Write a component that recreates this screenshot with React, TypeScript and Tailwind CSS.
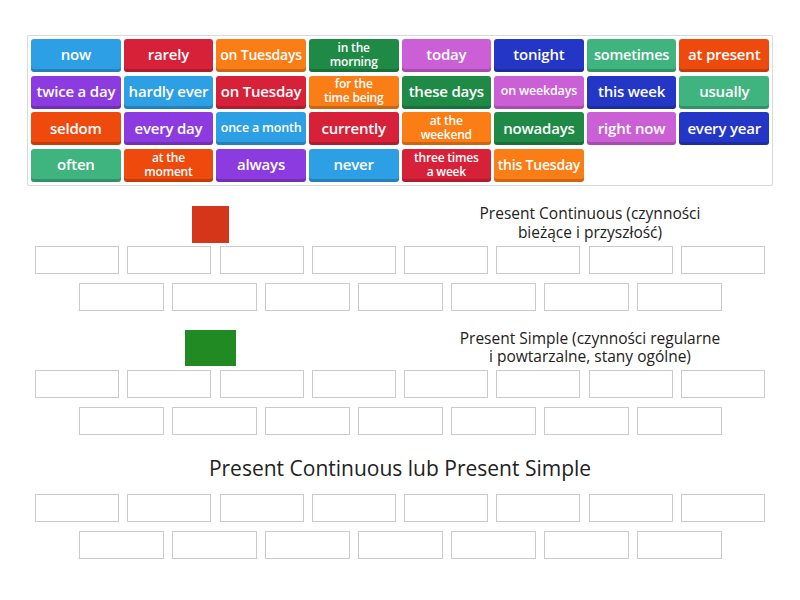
import React from 'react';

type Tile = { label: string; color: string; size?: string; two?: boolean };

const BLUE = 'bg-[#2d9fe5]';
const RED = 'bg-[#d72139]';
const ORANGE = 'bg-[#fa7d15]';
const DGREEN = 'bg-[#1f8a46]';
const MAGENTA = 'bg-[#cb5fd5]';
const DBLUE = 'bg-[#2436c6]';
const SEA = 'bg-[#3fb47f]';
const ORED = 'bg-[#ee4a0d]';
const PURPLE = 'bg-[#8b3be0]';

const tiles: Tile[] = [
  { label: 'now', color: BLUE },
  { label: 'rarely', color: RED },
  { label: 'on Tuesdays', color: ORANGE, size: 'text-[14px]' },
  { label: 'in the morning', color: DGREEN, two: true },
  { label: 'today', color: MAGENTA },
  { label: 'tonight', color: DBLUE },
  { label: 'sometimes', color: SEA, size: 'text-[14.5px]' },
  { label: 'at present', color: ORED },
  { label: 'twice a day', color: PURPLE },
  { label: 'hardly ever', color: BLUE },
  { label: 'on Tuesday', color: RED },
  { label: 'for the time being', color: ORANGE, two: true },
  { label: 'these days', color: DGREEN },
  { label: 'on weekdays', color: MAGENTA, size: 'text-[12.5px]' },
  { label: 'this week', color: DBLUE },
  { label: 'usually', color: SEA },
  { label: 'seldom', color: ORED },
  { label: 'every day', color: PURPLE },
  { label: 'once a month', color: BLUE, size: 'text-[12.5px]' },
  { label: 'currently', color: RED },
  { label: 'at the weekend', color: ORANGE, two: true },
  { label: 'nowadays', color: DGREEN },
  { label: 'right now', color: MAGENTA },
  { label: 'every year', color: DBLUE },
  { label: 'often', color: SEA },
  { label: 'at the moment', color: ORED, two: true },
  { label: 'always', color: PURPLE },
  { label: 'never', color: BLUE },
  { label: 'three times a week', color: RED, two: true },
  { label: 'this Tuesday', color: ORANGE, size: 'text-[14px]' },
];

function twoLines(label: string) {
  if (label === 'three times a week') return ['three times', 'a week'];
  if (label === 'for the time being') return ['for the', 'time being'];
  const words = label.split(' ');
  return [words.slice(0, 2).join(' '), words.slice(2).join(' ')];
}

function DropRows() {
  return (
    <div className="flex flex-col gap-[9px]">
      <div className="flex justify-center gap-[8.3px]">
        {Array.from({ length: 8 }).map((_, i) => (
          <div key={i} className="w-[84px] h-[28px] border border-[#cbcbcb] bg-white" />
        ))}
      </div>
      <div className="flex justify-center gap-[8px]">
        {Array.from({ length: 7 }).map((_, i) => (
          <div key={i} className="w-[85px] h-[28px] border border-[#cbcbcb] bg-white" />
        ))}
      </div>
    </div>
  );
}

export default function App() {
  return (
    <div
      className="w-[800px] h-[600px] bg-white text-[#222]"
      style={{ fontFamily: '"Open Sans", sans-serif' }}
    >
      {/* Tile bank */}
      <div className="pt-[35px] px-[27px]">
        <div className="border border-[#d9d9d9] rounded-[2px] px-[3px] pt-[3px] pb-[3px]">
          <div className="grid grid-cols-8 gap-x-[3px] gap-y-[3.7px] auto-rows-[33px]">
            {tiles.map((t) => (
              <div
                key={t.label}
                className={`${t.color} rounded-[3px] flex items-center justify-center text-white font-semibold text-center whitespace-nowrap tracking-[-0.2px] shadow-[inset_0_-3px_0_rgba(0,0,0,0.18)] ${
                  t.two ? 'text-[12px] leading-[14px]' : t.size ?? 'text-[15px]'
                }`}
              >
                {t.two ? (
                  <div className="flex flex-col -mt-[2px]">
                    {twoLines(t.label).map((l) => (
                      <span key={l}>{l}</span>
                    ))}
                  </div>
                ) : (
                  <span className="-mt-[2px]">{t.label}</span>
                )}
              </div>
            ))}
          </div>
        </div>
      </div>

      {/* Group 1 */}
      <div className="px-[20px] mt-[16px]">
        <div className="grid grid-cols-2 h-[44px] items-center">
          <div className="flex justify-center">
            <div className="w-[37px] h-[37px] bg-[#d5361a]" />
          </div>
          <div className="text-center text-[15.5px] leading-[19px] -mt-[2px]">
            Present Continuous (czynności
            <br />
            bieżące i przyszłość)
          </div>
        </div>
        <DropRows />
      </div>

      {/* Group 2 */}
      <div className="px-[20px] mt-[15px]">
        <div className="grid grid-cols-2 h-[44px] items-center">
          <div className="flex justify-center">
            <div className="w-[51px] h-[36px] bg-[#228a22]" />
          </div>
          <div className="text-center text-[15.5px] leading-[18px] -mt-[2px]">
            Present Simple (czynności regularne
            <br />
            i powtarzalne, stany ogólne)
          </div>
        </div>
        <DropRows />
      </div>

      {/* Group 3 */}
      <div className="px-[20px] mt-[14px]">
        <div className="h-[45px] flex items-center justify-center text-[21px] pb-[5px]">
          Present Continuous lub Present Simple
        </div>
        <DropRows />
      </div>
    </div>
  );
}
